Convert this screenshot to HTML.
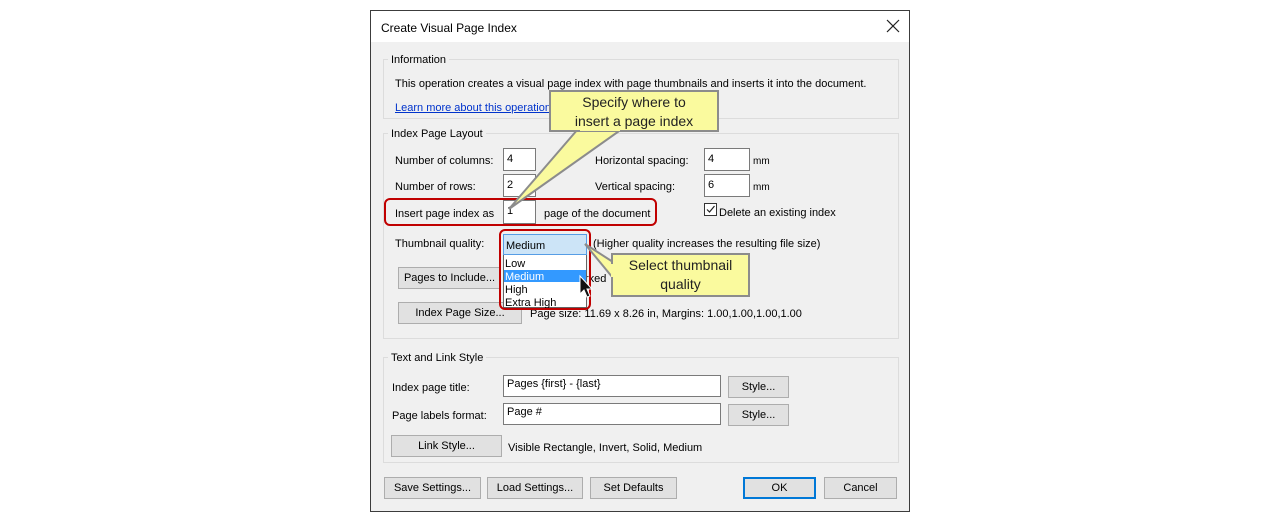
<!DOCTYPE html>
<html><head><style>
body{margin:0;width:1279px;height:526px;background:#fff;position:relative;overflow:hidden;font-family:"Liberation Sans",sans-serif;font-size:11px;color:#000}
.a{position:absolute}
.t{position:absolute;white-space:nowrap;line-height:13px;margin-top:2px}
.grp{position:absolute;border:1px solid #dcdcdc}
.gl{position:absolute;background:#f0f0f0;padding:0 3px;line-height:13px;margin-top:1px}
.in{position:absolute;background:#fff;border:1px solid #7a7a7a;box-sizing:border-box;padding:4px 3px 0;line-height:13px}
.btn{position:absolute;background:#e1e1e1;border:1px solid #adadad;box-sizing:border-box;text-align:center;line-height:21px}
.red{position:absolute;border:2px solid #c00000;border-radius:6px;box-sizing:border-box}
.call{position:absolute;background:#fafa9e;border:2px solid #8c8c8c;box-sizing:border-box;text-align:center;font-size:14px;line-height:19px;color:#222;padding-top:1px}
</style></head><body>
<div class="a" style="left:370px;top:10px;width:540px;height:502px;border:1px solid #3c3c3c;box-sizing:border-box;background:#f0f0f0"></div>
<div class="a" style="left:371px;top:11px;width:538px;height:31px;background:#fff"></div>
<div class="t" style="left:381px;top:20px;font-size:12px">Create Visual Page Index</div>
<svg class="a" style="left:886px;top:19px" width="14" height="14"><path d="M1 1L13 13M13 1L1 13" stroke="#222" stroke-width="1.2"/></svg>

<div class="grp" style="left:383px;top:59px;width:514px;height:58px"></div>
<div class="gl" style="left:388px;top:53px">Information</div>
<div class="t" style="left:395px;top:76px">This operation creates a visual page index with page thumbnails and inserts it into the document.</div>
<div class="t" style="left:395px;top:100px;color:#0033cc;text-decoration:underline">Learn more about this operation</div>

<div class="grp" style="left:383px;top:133px;width:514px;height:204px"></div>
<div class="gl" style="left:388px;top:127px">Index Page Layout</div>
<div class="t" style="left:395px;top:153px">Number of columns:</div>
<div class="in" style="left:503px;top:148px;width:33px;height:23px">4</div>
<div class="t" style="left:595px;top:153px">Horizontal spacing:</div>
<div class="in" style="left:704px;top:148px;width:46px;height:23px">4</div>
<div class="t" style="left:753px;top:153px;font-size:10px">mm</div>
<div class="t" style="left:395px;top:179px">Number of rows:</div>
<div class="in" style="left:503px;top:174px;width:33px;height:23px">2</div>
<div class="t" style="left:595px;top:179px">Vertical spacing:</div>
<div class="in" style="left:704px;top:174px;width:46px;height:23px">6</div>
<div class="t" style="left:753px;top:179px;font-size:10px">mm</div>
<div class="t" style="left:395px;top:206px">Insert page index as</div>
<div class="in" style="left:503px;top:200px;width:33px;height:24px">1</div>
<div class="t" style="left:544px;top:206px">page of the document</div>
<div class="red" style="left:384px;top:198px;width:273px;height:28px"></div>
<div class="a" style="left:704px;top:203px;width:13px;height:13px;border:1px solid #333;box-sizing:border-box;background:#fff"></div>
<svg class="a" style="left:705px;top:204px" width="11" height="11"><path d="M2 5.5L4.5 8L9.5 2" stroke="#222" fill="none" stroke-width="1.2"/></svg>
<div class="t" style="left:719px;top:205px">Delete an existing index</div>
<div class="t" style="left:395px;top:236px">Thumbnail quality:</div>
<div class="t" style="left:593px;top:236px">(Higher quality increases the resulting file size)</div>
<div class="btn" style="left:398px;top:267px;width:103px;height:22px">Pages to Include...</div>
<div class="t" style="left:585px;top:271px">rked</div>
<div class="btn" style="left:398px;top:302px;width:124px;height:22px">Index Page Size...</div>
<div class="t" style="left:530px;top:306px">Page size: 11.69 x 8.26 in, Margins: 1.00,1.00,1.00,1.00</div>

<div class="a" style="left:503px;top:234px;width:84px;height:21px;background:#cce4f7;border:1px solid #569de5;box-sizing:border-box"></div>
<div class="t" style="left:506px;top:238px">Medium</div>
<div class="a" style="left:503px;top:255px;width:84px;height:53px;background:#fff;border:1px solid #646464;border-top:none;box-sizing:border-box"></div>
<div class="t" style="left:505px;top:256px">Low</div>
<div class="a" style="left:504px;top:270px;width:82px;height:12px;background:#3399ff"></div>
<div class="t" style="left:505px;top:269px;color:#fff">Medium</div>
<div class="t" style="left:505px;top:282px">High</div>
<div class="t" style="left:505px;top:295px">Extra High</div>
<div class="red" style="left:499px;top:229px;width:92px;height:81px"></div>
<svg class="a" style="left:578px;top:274px" width="16" height="26"><path d="M2 2L2 20L6 16L9 23L12 22L9 15L14 15Z" fill="#111" stroke="#fff" stroke-width="1"/></svg>

<div class="grp" style="left:383px;top:357px;width:514px;height:104px"></div>
<div class="gl" style="left:388px;top:351px">Text and Link Style</div>
<div class="t" style="left:392px;top:380px">Index page title:</div>
<div class="in" style="left:503px;top:375px;width:218px;height:22px;padding-top:2px">Pages {first} - {last}</div>
<div class="btn" style="left:728px;top:376px;width:61px;height:22px">Style...</div>
<div class="t" style="left:392px;top:408px">Page labels format:</div>
<div class="in" style="left:503px;top:403px;width:218px;height:22px;padding-top:2px">Page #</div>
<div class="btn" style="left:728px;top:404px;width:61px;height:22px">Style...</div>
<div class="btn" style="left:391px;top:435px;width:111px;height:22px">Link Style...</div>
<div class="t" style="left:508px;top:440px">Visible Rectangle, Invert, Solid, Medium</div>

<div class="btn" style="left:384px;top:477px;width:97px;height:22px">Save Settings...</div>
<div class="btn" style="left:487px;top:477px;width:96px;height:22px">Load Settings...</div>
<div class="btn" style="left:590px;top:477px;width:87px;height:22px">Set Defaults</div>
<div class="btn" style="left:743px;top:477px;width:73px;height:22px;border:2px solid #0078d7;line-height:19px">OK</div>
<div class="btn" style="left:824px;top:477px;width:73px;height:22px">Cancel</div>

<svg class="a" style="left:0;top:0" width="1279" height="526"><path d="M578 129L509 209L622 129Z" fill="#fafa9e" stroke="#8c8c8c" stroke-width="2"/><path d="M613 262L585 244L613 278Z" fill="#fafa9e" stroke="#8c8c8c" stroke-width="2"/></svg>
<div class="call" style="left:549px;top:90px;width:170px;height:42px">Specify where to<br>insert a page index</div>
<div class="call" style="left:611px;top:253px;width:139px;height:44px">Select thumbnail<br>quality</div>
<div class="a" style="left:580px;top:128px;width:40px;height:3px;background:#fafa9e"></div>
<div class="a" style="left:611px;top:264px;width:3px;height:13px;background:#fafa9e"></div>
</body></html>
